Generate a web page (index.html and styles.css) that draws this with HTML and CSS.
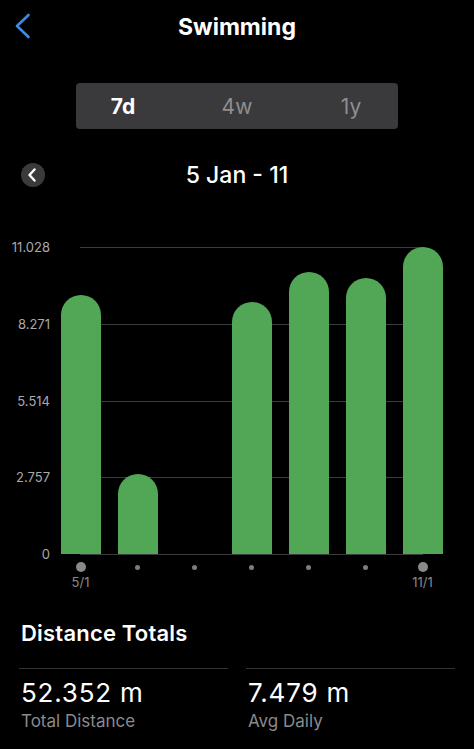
FILE: index.html
```html
<html>
<head>
<title>Swimming</title>
<meta charset="utf-8">
<meta name="viewport" content="width=device-width, initial-scale=1">
<link rel="stylesheet" href="styles.css">
</head>
<body>
<div class="screen">
	<div class="nav">
		<a class="back" href="#">
			<svg width="16" height="26" viewBox="0 0 16 26"><path d="M13.5 2 L2 13 L13.5 24" fill="none" stroke="#3c8ce7" stroke-width="2.6" stroke-linecap="round" stroke-linejoin="round"/></svg>
		</a>
		<h1 class="title">Swimming</h1>
	</div>

	<div class="segmented">
		<span class="seg active">7d</span>
		<span class="seg">4w</span>
		<span class="seg">1y</span>
	</div>

	<div class="range">
		<a class="prev" href="#">
			<svg width="10" height="14" viewBox="0 0 10 14"><path d="M7.5 1.5 L2.5 7 L7.5 12.5" fill="none" stroke="#fff" stroke-width="2.4" stroke-linecap="round" stroke-linejoin="round"/></svg>
		</a>
		<div class="range-label">5 Jan - 11</div>
	</div>

	<div class="chart">
		<div class="axis">
			<span>11.028</span>
			<span>8.271</span>
			<span>5.514</span>
			<span>2.757</span>
			<span>0</span>
		</div>
		<div class="plot">
			<div class="bars">
				<div class="grid">
					<i></i><i></i><i></i><i></i><i></i>
				</div>
				<div class="col"><div class="bar" style="height:259px"></div></div>
				<div class="col"><div class="bar" style="height:80px"></div></div>
				<div class="col"><div class="bar" style="height:0"></div></div>
				<div class="col"><div class="bar" style="height:252px"></div></div>
				<div class="col"><div class="bar" style="height:282px"></div></div>
				<div class="col"><div class="bar" style="height:276px"></div></div>
				<div class="col"><div class="bar" style="height:307px"></div></div>
			</div>
			<div class="ticks">
				<div class="tick"><span class="dot big"></span><span class="day">5/1</span></div>
				<div class="tick"><span class="dot"></span></div>
				<div class="tick"><span class="dot"></span></div>
				<div class="tick"><span class="dot"></span></div>
				<div class="tick"><span class="dot"></span></div>
				<div class="tick"><span class="dot"></span></div>
				<div class="tick"><span class="dot big"></span><span class="day">11/1</span></div>
			</div>
		</div>
	</div>

	<div class="totals">
		<h2 class="totals-title">Distance Totals</h2>
		<div class="stats">
			<div class="stat">
				<div class="value">52.352 m</div>
				<div class="caption">Total Distance</div>
			</div>
			<div class="stat">
				<div class="value">7.479 m</div>
				<div class="caption">Avg Daily</div>
			</div>
		</div>
	</div>
</div>
</body>
</html>
```

FILE: styles.css
```css
body{
	margin:0;
	background:#000;
	color:#fff;
	font-family:Inter,'Noto Sans',sans-serif;
}
*,:after,:before{box-sizing:border-box}
a{color:inherit;text-decoration:none}
h1,h2{margin:0}

.screen{
	width:474px;
	height:749px;
	overflow:hidden;
}

/* top bar */
.nav{
	position:relative;
	padding-top:13px;
	text-align:center;
}
.nav .back{
	position:absolute;
	left:15px;
	top:13px;
}
.nav .title{
	font-size:23px;
	line-height:28px;
	font-weight:700;
}

/* 7d / 4w / 1y */
.segmented{
	width:322px;
	height:46px;
	margin:42px auto 0;
	background:#3a3a3c;
	border-radius:4px;
	display:flex;
	align-items:center;
	justify-content:center;
	gap:74px;
}
.segmented .seg{
	width:40px;
	text-align:center;
	font-size:21px;
	color:#8e8e90;
}
.segmented .seg.active{
	color:#fff;
	font-weight:700;
}

/* date range */
.range{
	position:relative;
	height:24px;
	margin-top:34px;
	display:flex;
	align-items:center;
	justify-content:center;
}
.range .prev{
	position:absolute;
	left:21px;
	top:0;
	width:24px;
	height:24px;
	border-radius:50%;
	background:#3a3a3c;
	display:flex;
	align-items:center;
	justify-content:center;
	padding-right:2px;
}
.range-label{
	font-size:23px;
	font-weight:500;
	line-height:28px;
}

/* chart */
.chart{
	display:flex;
	align-items:flex-start;
	margin-top:52px;
}
.axis{
	width:52px;
	height:323px;
	padding-right:2px;
	display:flex;
	flex-direction:column;
	justify-content:space-between;
	align-items:flex-end;
}
.axis span{
	height:16px;
	line-height:16px;
	font-size:13px;
	color:#a9a9ab;
}
.plot{
	margin-top:8px;
	width:399px;
}
.bars{
	position:relative;
	height:307px;
	display:flex;
	align-items:flex-end;
}
.grid{
	position:absolute;
	top:0;
	bottom:-1px;
	left:28px;
	right:28px;
	display:flex;
	flex-direction:column;
	justify-content:space-between;
}
.grid i{
	display:block;
	height:1px;
	background:#3b3b3d;
}
.col{
	position:relative;
	width:57px;
	display:flex;
	justify-content:center;
}
.bar{
	width:40px;
	background:#51a756;
	border-radius:20px 20px 0 0;
}
.ticks{
	display:flex;
}
.tick{
	width:57px;
	display:flex;
	flex-direction:column;
	align-items:center;
}
.dot{
	width:5px;
	height:5px;
	margin-top:11px;
	border-radius:50%;
	background:#7d7d7f;
}
.dot.big{
	width:10px;
	height:10px;
	margin-top:8px;
	background:#8a8a8c;
}
.day{
	margin-top:2px;
	font-size:13px;
	line-height:16px;
	color:#8a8a8c;
}

/* totals */
.totals{
	padding:0 19px;
	margin-top:30px;
}
.totals-title{
	padding-left:2px;
	font-size:22px;
	line-height:27px;
	font-weight:600;
	letter-spacing:0.2px;
}
.stats{
	display:grid;
	grid-template-columns:1fr 1fr;
	gap:18px;
	margin-top:21px;
}
.stat{
	border-top:1px solid #333335;
	padding:9px 0 0 2px;
}
.stat .value{
	font-size:26px;
	line-height:30px;
	letter-spacing:0.8px;
}
.stat .caption{
	margin-top:2px;
	font-size:17px;
	line-height:22px;
	color:#8a8a8c;
}
```
